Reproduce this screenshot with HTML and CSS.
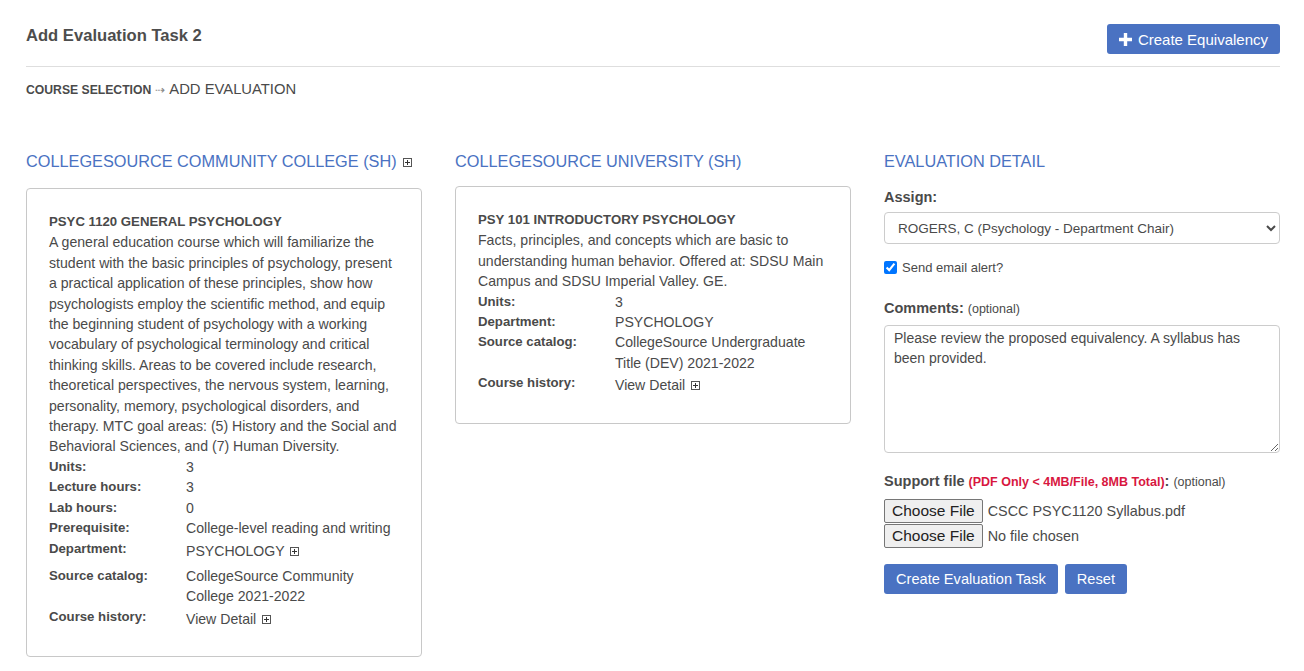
FILE: index.html
```html
<!DOCTYPE html>
<html lang="en">
<head>
    <meta charset="UTF-8">
    <meta name="viewport" content="width=device-width, initial-scale=1.0">
    <title>Add Evaluation Task 2</title>
    <link rel="stylesheet" href="styles.css">
</head>
<body>
<div class="page">
    <div class="page-header">
        <h1>Add Evaluation Task 2</h1>
        <button class="btn btn-create" type="button">
            <svg class="plus" width="13" height="13" viewBox="0 0 13 13"><path d="M4.8 0h3.4v4.8H13v3.4H8.2V13H4.8V8.2H0V4.8h4.8z" fill="#fff"/></svg>
            Create Equivalency
        </button>
    </div>

    <div class="crumbs">
        <span class="crumb-done">COURSE SELECTION</span>
        <span class="crumb-arrow">&#8674;</span>
        <span class="crumb-current">ADD EVALUATION</span>
    </div>

    <div class="columns">
        <!-- sending institution -->
        <div class="col">
            <h2 class="with-toggle">COLLEGESOURCE COMMUNITY COLLEGE (SH) <span class="boxplus"></span></h2>
            <div class="card">
                <div class="course-title">PSYC 1120 GENERAL PSYCHOLOGY</div>
                <p class="course-desc">A general education course which will familiarize the student with the basic principles of psychology, present a practical application of these principles, show how psychologists employ the scientific method, and equip the beginning student of psychology with a working vocabulary of psychological terminology and critical thinking skills. Areas to be covered include research, theoretical perspectives, the nervous system, learning, personality, memory, psychological disorders, and therapy. MTC goal areas: (5) History and the Social and Behavioral Sciences, and (7) Human Diversity.</p>
                <div class="details">
                    <div class="row"><span class="label">Units:</span><span class="value">3</span></div>
                    <div class="row"><span class="label">Lecture hours:</span><span class="value">3</span></div>
                    <div class="row"><span class="label">Lab hours:</span><span class="value">0</span></div>
                    <div class="row"><span class="label">Prerequisite:</span><span class="value">College-level reading and writing</span></div>
                    <div class="row with-icon"><span class="label">Department:</span><span class="value">PSYCHOLOGY <span class="boxplus"></span></span></div>
                    <div class="row"><span class="label">Source catalog:</span><span class="value">CollegeSource Community College 2021-2022</span></div>
                    <div class="row with-icon"><span class="label">Course history:</span><span class="value">View Detail <span class="boxplus"></span></span></div>
                </div>
            </div>
        </div>

        <!-- receiving institution -->
        <div class="col">
            <h2>COLLEGESOURCE UNIVERSITY (SH)</h2>
            <div class="card">
                <div class="course-title">PSY 101 INTRODUCTORY PSYCHOLOGY</div>
                <p class="course-desc">Facts, principles, and concepts which are basic to understanding human behavior. Offered at: SDSU Main Campus and SDSU Imperial Valley. GE.</p>
                <div class="details">
                    <div class="row"><span class="label">Units:</span><span class="value">3</span></div>
                    <div class="row"><span class="label">Department:</span><span class="value">PSYCHOLOGY</span></div>
                    <div class="row"><span class="label">Source catalog:</span><span class="value">CollegeSource Undergraduate Title (DEV) 2021-2022</span></div>
                    <div class="row with-icon"><span class="label">Course history:</span><span class="value">View Detail <span class="boxplus"></span></span></div>
                </div>
            </div>
        </div>

        <!-- evaluation form -->
        <div class="col">
            <h2>EVALUATION DETAIL</h2>
            <form class="eval-form">
                <label class="field-label assign-label" for="assign">Assign:</label>
                <select id="assign">
                    <option>ROGERS, C (Psychology - Department Chair)</option>
                </select>
                <label class="check"><input type="checkbox" checked> Send email alert?</label>

                <label class="field-label" for="comments">Comments: <span class="opt">(optional)</span></label>
                <textarea id="comments">Please review the proposed equivalency. A syllabus has been provided.</textarea>

                <div class="field-label">Support file <span class="warn">(PDF Only &lt; 4MB/File, 8MB Total)</span>: <span class="opt">(optional)</span></div>
                <div class="file-row"><button type="button" class="choose">Choose File</button><span>CSCC PSYC1120 Syllabus.pdf</span></div>
                <div class="file-row"><button type="button" class="choose">Choose File</button><span>No file chosen</span></div>

                <div class="actions">
                    <button class="btn" type="button">Create Evaluation Task</button>
                    <button class="btn" type="reset">Reset</button>
                </div>
            </form>
        </div>
    </div>
</div>
</body>
</html>
```

FILE: styles.css
```css
body {
    font-family: "Liberation Sans", Arial, sans-serif;
    color: #4a4a4a;
    background-color: #fff;
    margin: 0;
    padding: 0;
}

.page {
    padding: 0 24px 0 26px;
}

.page-header {
    display: flex;
    justify-content: space-between;
    align-items: flex-start;
    padding: 24px 0 12px;
    border-bottom: 1px solid #dedede;
}

h1 {
    margin: 0;
    font-size: 16.6px;
    line-height: 24px;
    font-weight: bold;
    color: #4d4d4d;
}

.btn {
    background-color: #4a72c2;
    color: #fff;
    font-family: inherit;
    font-size: 14.6px;
    border: none;
    border-radius: 3px;
    padding: 0 12px;
    height: 30px;
    cursor: pointer;
}

.btn:hover {
    background-color: #3d62ad;
}

.btn-create {
    display: flex;
    align-items: center;
    gap: 6px;
    font-size: 15px;
}

.crumbs {
    margin-top: 14px;
    display: flex;
    align-items: baseline;
    gap: 4px;
}

.crumb-done {
    font-size: 12.2px;
    font-weight: bold;
}

.crumb-arrow {
    font-size: 12px;
    color: #888;
}

.crumb-current {
    font-size: 14.8px;
}

.columns {
    display: grid;
    grid-template-columns: repeat(3, 1fr);
    column-gap: 33px;
    margin-top: 54px;
    align-items: start;
}

h2 {
    margin: 0 0 15px;
    font-size: 16.3px;
    font-weight: normal;
    color: #4a72c2;
    line-height: 20px;
}

h2.with-toggle {
    margin-bottom: 17px;
}

.boxplus {
    display: inline-block;
    width: 7px;
    height: 7px;
    border: 1px solid #555;
    position: relative;
    vertical-align: 0;
    margin-left: 2px;
}

.boxplus::before,
.boxplus::after {
    content: "";
    position: absolute;
    background: #333;
}

.boxplus::before {
    left: 1px;
    top: 3px;
    width: 5px;
    height: 1px;
}

.boxplus::after {
    left: 3px;
    top: 1px;
    width: 1px;
    height: 5px;
}

.card {
    border: 1px solid #c8c8c8;
    border-radius: 4px;
    padding: 23px 22px 27px;
    font-size: 14.1px;
    line-height: 20.4px;
}

.course-title {
    font-weight: bold;
    font-size: 13.2px;
}

.course-desc {
    margin: 0;
}

.row {
    display: flex;
}

.label {
    flex: 0 0 137px;
    font-weight: bold;
    font-size: 13.2px;
}

.row.with-icon {
    margin-bottom: 5px;
}

.row.with-icon .value {
    padding-top: 2px;
}

.row:last-child {
    margin-bottom: 0;
}

.eval-form {
    display: flex;
    flex-direction: column;
    align-items: flex-start;
    padding-top: 3px;
}

.field-label {
    font-weight: bold;
    font-size: 14.5px;
    margin-bottom: 9px;
}

.assign-label {
    margin-bottom: 7px;
}

.opt {
    font-weight: normal;
    font-size: 12.5px;
}

.warn {
    color: #d8173f;
    font-size: 12.5px;
}

select {
    width: 100%;
    height: 32px;
    font-family: "Liberation Sans", Arial, sans-serif;
    font-size: 13.5px;
    color: #4a4a4a;
    padding: 0 9px;
    border: 1px solid #ccc;
    border-radius: 4px;
    background: #fff;
}

.check {
    display: flex;
    align-items: center;
    font-size: 13px;
    margin: 16px 0 25px;
}

.check input {
    margin: 0 5px 0 0;
    width: 13px;
    height: 13px;
}

textarea {
    width: 100%;
    height: 128px;
    box-sizing: border-box;
    font-family: "Liberation Sans", Arial, sans-serif;
    font-size: 14px;
    line-height: 20px;
    color: #4a4a4a;
    padding: 2px 9px;
    border: 1px solid #ccc;
    border-radius: 4px;
    resize: vertical;
    margin-bottom: 20px;
}

.file-row {
    display: flex;
    align-items: center;
    gap: 5px;
    font-size: 14.4px;
    height: 25px;
}

.choose {
    font-family: "Liberation Sans", Arial, sans-serif;
    font-size: 15.5px;
    color: #222;
    background: #efefef;
    border: 1px solid #767676;
    border-radius: 2px;
    padding: 1px 7px;
    height: 24px;
}

.actions {
    display: flex;
    gap: 7px;
    margin-top: 16px;
}
```
